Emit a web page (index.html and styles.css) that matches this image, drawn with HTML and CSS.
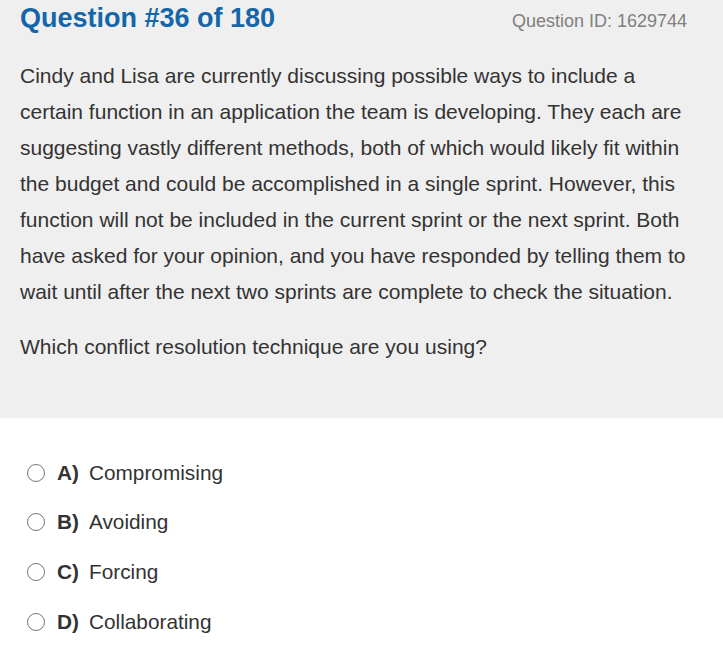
FILE: index.html
```html
<!DOCTYPE html>
<html>
<head>
<meta charset="utf-8">
<link rel="stylesheet" href="styles.css">
</head>
<body>
<div class="stem">
  <div class="head">
    <h1 class="title">Question #36 of 180</h1>
    <span class="qid">Question ID: 1629744</span>
  </div>
  <p class="text">Cindy and Lisa are currently discussing possible ways to include a<br>certain function in an application the team is developing. They each are<br>suggesting vastly different methods, both of which would likely fit within<br>the budget and could be accomplished in a single sprint. However, this<br>function will not be included in the current sprint or the next sprint. Both<br>have asked for your opinion, and you have responded by telling them to<br>wait until after the next two sprints are complete to check the situation.</p>
  <p class="ask">Which conflict resolution technique are you using?</p>
</div>
<ul class="options">
  <li class="opt"><span class="radio"></span><b class="letter">A)</b><span>Compromising</span></li>
  <li class="opt"><span class="radio"></span><b class="letter">B)</b><span>Avoiding</span></li>
  <li class="opt"><span class="radio"></span><b class="letter">C)</b><span>Forcing</span></li>
  <li class="opt"><span class="radio"></span><b class="letter">D)</b><span>Collaborating</span></li>
</ul>
</body>
</html>
```
FILE: styles.css
```css
* { box-sizing: border-box; }
html, body { margin: 0; padding: 0; background: #fff; }
body { font-family: "Liberation Sans", Arial, sans-serif; color: #333; }
.stem { background: #efefef; padding: 0 20px 0 20px; height: 418px; }
.head { display: flex; justify-content: space-between; align-items: baseline; padding: 2px 16px 0 0; }
.title { margin: 0; font-size: 27px; font-weight: bold; color: #1566a8; line-height: 32px; }
.qid { font-size: 18px; color: #808080; }
.text { margin: 24px 0 0; font-size: 21px; line-height: 36px; white-space: nowrap; }
.ask { margin: 19px 0 0; font-size: 21px; line-height: 36px; }
.options { list-style: none; margin: 0; padding: 30px 0 0 27px; }
.opt { display: flex; align-items: center; height: 49.6px; font-size: 20.8px; }
.radio { width: 18px; height: 18px; border: 1.5px solid #777; border-radius: 50%; margin-right: 12px; flex: none; }
.letter { margin-right: 10px; }
```
